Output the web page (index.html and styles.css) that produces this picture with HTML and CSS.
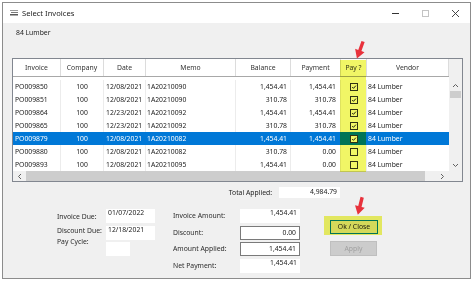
FILE: index.html
```html
<!DOCTYPE html>
<html lang="en">
<head>
  <meta charset="UTF-8" />
  <title>Select Invoices</title>
  <link rel="stylesheet" href="styles.css">
</head>
<body>

  <div class="window">
    <div class="titlebar">
      <svg class="app-icon" width="8" height="6" viewBox="0 0 8 6">
        <rect x="0" y="0" width="8" height="1" fill="#9a9a9a"/>
        <rect x="1" y="2" width="7" height="1" fill="#7a7a7a"/>
        <rect x="0" y="4" width="8" height="1.5" fill="#5a5a5a"/>
      </svg>
      <span class="title">Select Invoices</span>
      <div class="controls">
        <span class="ctl"><svg width="7" height="7" viewBox="0 0 7 7"><path d="M0 3.5H7" stroke="#333" stroke-width="1"/></svg></span>
        <span class="ctl"><svg width="7" height="7" viewBox="0 0 7 7"><rect x="0.5" y="0.5" width="6" height="6" fill="none" stroke="#c4c4c4"/></svg></span>
        <span class="ctl"><svg width="7" height="7" viewBox="0 0 7 7"><path d="M0 0L7 7M7 0L0 7" stroke="#333" stroke-width="0.9"/></svg></span>
      </div>
    </div>

    <div class="client">
      <div class="vendor-name">84 Lumber</div>

      <div class="grid">
        <div class="grid-main">
          <div class="row head">
            <div class="cell c">Invoice</div>
            <div class="cell c">Company</div>
            <div class="cell c">Date</div>
            <div class="cell c">Memo</div>
            <div class="cell c">Balance</div>
            <div class="cell c">Payment</div>
            <div class="cell c">Pay ?</div>
            <div class="cell c">Vendor</div>
          </div>
          <div class="rows">
            <div class="row">
              <div class="cell inv">PO009850</div><div class="cell c">100</div><div class="cell dt">12/08/2021</div><div class="cell memo">1A20210090</div>
              <div class="cell bal">1,454.41</div><div class="cell pay">1,454.41</div>
              <div class="cell c"><span class="chk on"><svg viewBox="0 0 8 8"><path d="M1.6 4.1L3.3 5.8L6.5 2.2" /></svg></span></div>
              <div class="cell vnd">84 Lumber</div>
            </div>
            <div class="row">
              <div class="cell inv">PO009851</div><div class="cell c">100</div><div class="cell dt">12/08/2021</div><div class="cell memo">1A20210090</div>
              <div class="cell bal">310.78</div><div class="cell pay">310.78</div>
              <div class="cell c"><span class="chk on"><svg viewBox="0 0 8 8"><path d="M1.6 4.1L3.3 5.8L6.5 2.2" /></svg></span></div>
              <div class="cell vnd">84 Lumber</div>
            </div>
            <div class="row">
              <div class="cell inv">PO009864</div><div class="cell c">100</div><div class="cell dt">12/23/2021</div><div class="cell memo">1A20210092</div>
              <div class="cell bal">1,454.41</div><div class="cell pay">1,454.41</div>
              <div class="cell c"><span class="chk on"><svg viewBox="0 0 8 8"><path d="M1.6 4.1L3.3 5.8L6.5 2.2" /></svg></span></div>
              <div class="cell vnd">84 Lumber</div>
            </div>
            <div class="row">
              <div class="cell inv">PO009865</div><div class="cell c">100</div><div class="cell dt">12/23/2021</div><div class="cell memo">1A20210092</div>
              <div class="cell bal">310.78</div><div class="cell pay">310.78</div>
              <div class="cell c"><span class="chk on"><svg viewBox="0 0 8 8"><path d="M1.6 4.1L3.3 5.8L6.5 2.2" /></svg></span></div>
              <div class="cell vnd">84 Lumber</div>
            </div>
            <div class="row sel">
              <div class="cell inv">PO009879</div><div class="cell c">100</div><div class="cell dt">12/08/2021</div><div class="cell memo">1A20210082</div>
              <div class="cell bal">1,454.41</div><div class="cell pay">1,454.41</div>
              <div class="cell c"><span class="chk on"><svg viewBox="0 0 8 8"><path d="M1.6 4.1L3.3 5.8L6.5 2.2" /></svg></span></div>
              <div class="cell vnd">84 Lumber</div>
            </div>
            <div class="row">
              <div class="cell inv">PO009880</div><div class="cell c">100</div><div class="cell dt">12/08/2021</div><div class="cell memo">1A20210082</div>
              <div class="cell bal">310.78</div><div class="cell pay">0.00</div>
              <div class="cell c"><span class="chk"></span></div>
              <div class="cell vnd">84 Lumber</div>
            </div>
            <div class="row">
              <div class="cell inv">PO009893</div><div class="cell c">100</div><div class="cell dt">12/08/2021</div><div class="cell memo">1A20210095</div>
              <div class="cell bal">1,454.41</div><div class="cell pay">0.00</div>
              <div class="cell c"><span class="chk"></span></div>
              <div class="cell vnd">84 Lumber</div>
            </div>
          </div>
        </div>

        <div class="vscroll">
          <span class="sb-btn"><svg width="7" height="5" viewBox="0 0 7 5"><path d="M1 4L3.5 1.5L6 4" /></svg></span>
          <span class="vthumb"></span>
          <span class="sb-fill"></span>
          <span class="sb-btn"><svg width="7" height="5" viewBox="0 0 7 5"><path d="M1 1L3.5 3.5L6 1" /></svg></span>
        </div>

        <div class="hscroll">
          <span class="sb-btn"><svg width="5" height="7" viewBox="0 0 5 7"><path d="M4 1L1.5 3.5L4 6" /></svg></span>
          <span class="hthumb"></span>
          <span class="sb-fill"></span>
          <span class="sb-btn"><svg width="5" height="7" viewBox="0 0 5 7"><path d="M1 1L3.5 3.5L1 6" /></svg></span>
        </div>
        <div class="corner"></div>
      </div>

      <div class="total">
        <span class="total-label">Total Applied:</span>
        <span class="box num">4,984.79</span>
      </div>

      <div class="form">
        <span class="lbl r1">Invoice Due:</span>
        <span class="box dtbox r1">01/07/2022</span>
        <span class="lbl mid r1">Invoice Amount:</span>
        <span class="box num r1 c5">1,454.41</span>

        <span class="lbl r2">Discount Due:</span>
        <span class="box dtbox r2">12/18/2021</span>
        <span class="lbl mid r2">Discount:</span>
        <span class="box num edit r2 c5">0.00</span>

        <span class="lbl r3">Pay Cycle:</span>
        <span class="box cycle r3"></span>
        <span class="lbl mid r3">Amount Applied:</span>
        <span class="box num edit r3 c5">1,454.41</span>

        <span class="lbl mid r4">Net Payment:</span>
        <span class="box num r4 c5">1,454.41</span>

        <button class="btn ok">Ok / Close</button>
        <button class="btn apply" disabled>Apply</button>
      </div>
    </div>
  </div>

  <!-- highlighter marks and arrows drawn over the screenshot -->
  <div class="mark mark-pay"></div>
  <div class="mark mark-ok"></div>
  <svg class="arrow arrow-pay" width="18" height="22" viewBox="0 0 18 22">
    <path transform="rotate(20 9 11)" d="M7.3 2H10.7V11.5H14L9 20L4 11.5H7.3Z" />
  </svg>
  <svg class="arrow arrow-ok" width="18" height="22" viewBox="0 0 18 22">
    <path transform="rotate(14 9 11)" d="M7.3 2H10.7V11.5H14L9 20L4 11.5H7.3Z" />
  </svg>

</body>
</html>
```

FILE: styles.css
```css
* {
  box-sizing: border-box;
}

body {
  margin: 0;
  background: #fff;
  font-family: "Noto Sans", "Open Sans", sans-serif;
  font-size: 6.8px;
  color: #222;
  position: relative;
}

.window {
  margin: 2px 3px 0 2px;
  height: 277px;
  border: 1px solid #8c8c8c;
  display: flex;
  flex-direction: column;
}

/* title bar */
.titlebar {
  height: 20px;
  background: #fff;
  display: flex;
  align-items: center;
  padding-left: 7px;
}

.app-icon {
  margin-right: 4px;
}

.title {
  font-size: 7.6px;
  color: #1e1e1e;
}

.controls {
  margin-left: auto;
  display: flex;
}

.ctl {
  width: 30px;
  height: 20px;
  display: flex;
  align-items: center;
  justify-content: center;
}

/* window body */
.client {
  flex: 1;
  background: #f0f0f0;
  padding-top: 5px;
}

.vendor-name {
  margin-left: 13px;
  line-height: 10px;
}

/* data grid */
.grid {
  margin: 20px 0 0 9px;
  width: 451px;
  height: 124px;
  border: 1px solid #828790;
  display: grid;
  grid-template-columns: 436px 13px;
  grid-template-rows: 112px 10px;
  background: #fff;
}

.row {
  display: grid;
  grid-template-columns: 48px 43px 42px 90px 55px 50px 26px 82px;
  height: 13px;
  line-height: 13px;
}

.row.head {
  height: 18px;
  line-height: 17px;
  color: #333;
  border-bottom: 1px solid #a8a8a8;
}

.rows {
  padding-top: 3px;
}

.cell {
  white-space: nowrap;
  overflow: hidden;
  border-right: 1px solid #ececec;
}

.head .cell {
  border-right-color: #dcdcdc;
}

.c { text-align: center; }
.inv { padding-left: 2px; }
.dt { padding-left: 2px; }
.memo { padding-left: 1px; }
.bal { text-align: right; padding-right: 3px; }
.pay { text-align: right; padding-right: 4px; }
.vnd { padding-left: 1px; border-right: none; }

.row.sel {
  background: #0078d7;
  color: #fff;
}

.row.sel .cell {
  border-right-color: #0078d7;
}

.chk {
  display: inline-block;
  width: 8px;
  height: 8px;
  margin-top: 2.5px;
  vertical-align: top;
  border: 1px solid #333;
  background: #fff;
}

.chk svg {
  display: block;
  width: 6px;
  height: 6px;
}

.chk path {
  fill: none;
  stroke: #1a1a1a;
  stroke-width: 1.3;
}

/* scroll bars */
.vscroll, .hscroll, .corner {
  background: #f0f0f0;
}

.vscroll {
  display: flex;
  flex-direction: column;
  align-items: center;
  padding-top: 20px;
}

.hscroll {
  display: flex;
  align-items: center;
}

.sb-btn {
  width: 13px;
  height: 12px;
  display: flex;
  align-items: center;
  justify-content: center;
}

.hscroll .sb-btn {
  height: 10px;
}

.sb-btn path {
  fill: none;
  stroke: #606060;
  stroke-width: 1;
}

.sb-fill {
  flex: 1;
}

.vthumb {
  width: 11px;
  height: 7px;
  background: #cdcdcd;
}

.hthumb {
  width: 399px;
  height: 10px;
  background: #cdcdcd;
}

/* totals and detail fields */
.total {
  display: flex;
  margin: 5px 0 0 209px;
  height: 11px;
  line-height: 11px;
}

.total-label {
  width: 60px;
  text-align: right;
  margin-right: 7px;
}

.total .box {
  width: 61px;
  line-height: 9px;
}

.box {
  background: #fff;
  white-space: nowrap;
}

.num {
  text-align: right;
  padding-right: 3px;
}

.form {
  display: grid;
  grid-template-columns: 49px 49px 18px 67px 60px 30px 48px;
  grid-template-rows: repeat(4, 14px);
  row-gap: 2.5px;
  margin: 11px 0 0 54px;
}

.lbl {
  grid-column: 1;
  align-self: start;
  line-height: 10px;
  white-space: nowrap;
  color: #2a2a2a;
}

.lbl.r1 { margin-top: 3px; }
.lbl.r2 { margin-top: 0; }
.lbl.r3 { margin-top: -5px; }

.lbl.mid {
  grid-column: 4;
  align-self: center;
  margin-top: 0;
}

.r1 { grid-row: 1; }
.r2 { grid-row: 2; }
.r3 { grid-row: 3; }
.r4 { grid-row: 4; }

.dtbox, .cycle {
  grid-column: 2;
  line-height: 8px;
  padding-left: 2px;
}

.cycle {
  width: 24px;
}

.c5 {
  grid-column: 5;
  line-height: 8px;
}

.box.edit {
  border: 1px solid #7a7a7a;
  line-height: 12px;
}

.btn {
  grid-column: 7;
  font-family: inherit;
  font-size: 6.8px;
  padding: 0;
  border-radius: 0;
}

.btn.ok {
  grid-row: 1 / span 2;
  align-self: end;
  height: 14px;
  margin-bottom: 6px;
  background: #e1e1e1;
  border: 1px solid #0078d7;
  color: #1a1a1a;
}

.btn.apply {
  grid-row: 3;
  height: 15px;
  margin-top: -1px;
  margin-right: 1px;
  background: #cccccc;
  border: 1px solid #bfbfbf;
  color: #a0a0a0;
}

/* annotations */
.mark {
  position: absolute;
  background: rgba(232, 240, 0, 0.6);
  mix-blend-mode: multiply;
  pointer-events: none;
}

.mark-pay {
  left: 340px;
  top: 60px;
  width: 26px;
  height: 112px;
}

.mark-ok {
  left: 324px;
  top: 216px;
  width: 58px;
  height: 19px;
}

.arrow {
  position: absolute;
}

.arrow path {
  fill: #e8323c;
}

.arrow-pay {
  left: 351px;
  top: 39px;
}

.arrow-ok {
  left: 351px;
  top: 195px;
}
```
